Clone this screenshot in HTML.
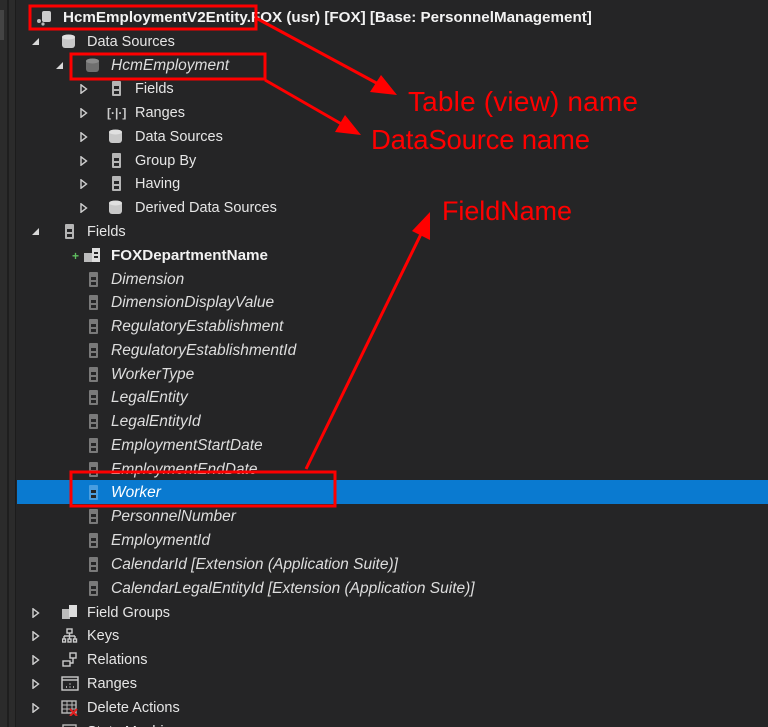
<!DOCTYPE html>
<html><head><meta charset="utf-8"><style>
*{margin:0;padding:0;box-sizing:border-box}
html,body{width:768px;height:727px;overflow:hidden}
body{background:#252526;position:relative;font-family:"Liberation Sans",sans-serif;font-size:14.5px;color:#e6e6e6}
.strip{position:absolute;left:0;top:0;width:16px;height:727px;background:#2b2b2b;border-right:1px solid #1c1c1c}
.strip:after{content:"";position:absolute;left:7px;top:0;width:2px;height:727px;background:#1e1e1e}
.r{position:absolute;height:24px;line-height:24px;white-space:nowrap;left:0;right:0}
.r span{position:absolute;top:1px}
.i{font-style:italic;color:#dedede;font-size:15.5px}
.b{font-weight:bold;color:#f2f2f2;font-size:15.2px}
.tri{position:absolute;top:8px}
.fld{position:absolute;top:5px;width:9px;height:15px;background:#b5b5b5;border-radius:1px}
.fld:before,.fld:after{content:"";position:absolute;left:2px;width:5px;height:3px;background:#252526}
.fld:before{top:5px}.fld:after{top:10px}
.fg{background:#7a7a7a}
.cyl{position:absolute;top:4px}
.sel{background:#0a7ad0}
</style></head><body>
<div class="strip"></div>
<div style="position:absolute;left:0;top:10px;width:4px;height:30px;background:#444"></div>

<svg width="0" height="0" style="position:absolute"><defs>
<symbol id="op" viewBox="0 0 10 10"><polygon points="8,1 8,8 1,8" fill="#d8d8d8"/></symbol>
<symbol id="cl" viewBox="0 0 10 10"><polygon points="2,0.8 7.5,5 2,9.2" fill="none" stroke="#d0d0d0" stroke-width="1.4"/></symbol>
</defs></svg>

<div class="r" style="top:5px"><svg class="cyl" style="left:35px;top:5px" width="18" height="16"><rect x="7" y="1" width="9" height="11" rx="2" fill="#ccc"/><circle cx="4" cy="11" r="2" fill="#bbb"/><circle cx="8" cy="14" r="1.6" fill="#bbb"/></svg><span class="b" style="left:63px">HcmEmploymentV2Entity.FOX (usr) [FOX] [Base: PersonnelManagement]</span></div>
<div class="r" style="top:29px"><svg class="tri" style="left:31px" width="10" height="10"><use href="#op"/></svg><svg class="cyl" style="left:61px" width="16" height="16"><rect x="1" y="2" width="13" height="13" rx="3" fill="#c8c8c8"/><ellipse cx="7.5" cy="4" rx="6.5" ry="2.5" fill="#e0e0e0"/></svg><span style="left:87px">Data Sources</span></div>
<div class="r" style="top:53px"><svg class="tri" style="left:55px" width="10" height="10"><use href="#op"/></svg><svg class="cyl" style="left:85px" width="16" height="16"><rect x="1" y="2" width="13" height="13" rx="3" fill="#6f6f6f"/><ellipse cx="7.5" cy="4" rx="6.5" ry="2.5" fill="#8a8a8a"/></svg><span class="i" style="left:111px">HcmEmployment</span></div>
<div class="r" style="top:76px"><svg class="tri" style="left:79px" width="10" height="10"><use href="#cl"/></svg><div class="fld" style="left:112px"></div><span style="left:135px">Fields</span></div>
<div class="r" style="top:100px"><svg class="tri" style="left:79px" width="10" height="10"><use href="#cl"/></svg><span style="left:107px;font-size:12px;font-weight:bold;color:#ccc">[·|·]</span><span style="left:135px">Ranges</span></div>
<div class="r" style="top:124px"><svg class="tri" style="left:79px" width="10" height="10"><use href="#cl"/></svg><svg class="cyl" style="left:108px" width="16" height="16"><rect x="1" y="2" width="13" height="13" rx="3" fill="#c8c8c8"/><ellipse cx="7.5" cy="4" rx="6.5" ry="2.5" fill="#e0e0e0"/></svg><span style="left:135px">Data Sources</span></div>
<div class="r" style="top:148px"><svg class="tri" style="left:79px" width="10" height="10"><use href="#cl"/></svg><div class="fld" style="left:112px"></div><span style="left:135px">Group By</span></div>
<div class="r" style="top:171px"><svg class="tri" style="left:79px" width="10" height="10"><use href="#cl"/></svg><div class="fld" style="left:112px"></div><span style="left:135px">Having</span></div>
<div class="r" style="top:195px"><svg class="tri" style="left:79px" width="10" height="10"><use href="#cl"/></svg><svg class="cyl" style="left:108px" width="16" height="16"><rect x="1" y="2" width="13" height="13" rx="3" fill="#c8c8c8"/><ellipse cx="7.5" cy="4" rx="6.5" ry="2.5" fill="#e0e0e0"/></svg><span style="left:135px">Derived Data Sources</span></div>
<div class="r" style="top:219px"><svg class="tri" style="left:31px" width="10" height="10"><use href="#op"/></svg><div class="fld" style="left:65px"></div><span style="left:87px">Fields</span></div>
<div class="r" style="top:243px"><span style="left:72px;color:#5fbf5f;font-weight:bold;font-size:12px">+</span><svg class="cyl" style="left:84px;top:5px" width="18" height="16"><rect x="0" y="5" width="8" height="9" fill="#bbb"/><rect x="8" y="0" width="8" height="14" fill="#ddd"/><rect x="10" y="4" width="4" height="2" fill="#252526"/><rect x="10" y="8" width="4" height="2" fill="#252526"/></svg><span class="b" style="left:111px">FOXDepartmentName</span></div>
<div class="r" style="top:267px"><div class="fld fg" style="left:89px"></div><span class="i" style="left:111px">Dimension</span></div>
<div class="r" style="top:290px"><div class="fld fg" style="left:89px"></div><span class="i" style="left:111px">DimensionDisplayValue</span></div>
<div class="r" style="top:314px"><div class="fld fg" style="left:89px"></div><span class="i" style="left:111px">RegulatoryEstablishment</span></div>
<div class="r" style="top:338px"><div class="fld fg" style="left:89px"></div><span class="i" style="left:111px">RegulatoryEstablishmentId</span></div>
<div class="r" style="top:362px"><div class="fld fg" style="left:89px"></div><span class="i" style="left:111px">WorkerType</span></div>
<div class="r" style="top:385px"><div class="fld fg" style="left:89px"></div><span class="i" style="left:111px">LegalEntity</span></div>
<div class="r" style="top:409px"><div class="fld fg" style="left:89px"></div><span class="i" style="left:111px">LegalEntityId</span></div>
<div class="r" style="top:433px"><div class="fld fg" style="left:89px"></div><span class="i" style="left:111px">EmploymentStartDate</span></div>
<div class="r" style="top:457px"><div class="fld fg" style="left:89px"></div><span class="i" style="left:111px">EmploymentEndDate</span></div>
<div class="r sel" style="top:480px;left:17px;height:24px"><div class="fld" style="left:72px;background:#4a9ee0"></div><span class="i" style="left:94px;color:#fff">Worker</span></div>
<div class="r" style="top:504px"><div class="fld fg" style="left:89px"></div><span class="i" style="left:111px">PersonnelNumber</span></div>
<div class="r" style="top:528px"><div class="fld fg" style="left:89px"></div><span class="i" style="left:111px">EmploymentId</span></div>
<div class="r" style="top:552px"><div class="fld fg" style="left:89px"></div><span class="i" style="left:111px">CalendarId [Extension (Application Suite)]</span></div>
<div class="r" style="top:576px"><div class="fld fg" style="left:89px"></div><span class="i" style="left:111px">CalendarLegalEntityId [Extension (Application Suite)]</span></div>
<div class="r" style="top:600px"><svg class="tri" style="left:31px" width="10" height="10"><use href="#cl"/></svg><svg class="cyl" style="left:62px;top:5px" width="16" height="16"><rect x="0" y="4" width="8" height="10" fill="#bbb"/><rect x="7" y="0" width="8" height="12" fill="#ddd"/></svg><span style="left:87px">Field Groups</span></div>
<div class="r" style="top:623px"><svg class="tri" style="left:31px" width="10" height="10"><use href="#cl"/></svg><svg class="cyl" style="left:62px;top:5px" width="16" height="16" stroke="#ccc" fill="none" stroke-width="1.4"><rect x="5" y="1" width="5" height="4"/><path d="M7.5 5v3M2 8h11M2 8v3M7.5 8v3M13 8v3"/><rect x="0.5" y="11" width="3" height="3"/><rect x="6" y="11" width="3" height="3"/><rect x="11.5" y="11" width="3" height="3"/></svg><span style="left:87px">Keys</span></div>
<div class="r" style="top:647px"><svg class="tri" style="left:31px" width="10" height="10"><use href="#cl"/></svg><svg class="cyl" style="left:62px;top:5px" width="16" height="16" stroke="#ccc" fill="none" stroke-width="1.4"><rect x="8" y="1" width="6" height="5"/><rect x="1" y="9" width="7" height="5"/><path d="M11 6v5H8"/></svg><span style="left:87px">Relations</span></div>
<div class="r" style="top:671px"><svg class="tri" style="left:31px" width="10" height="10"><use href="#cl"/></svg><svg class="cyl" style="left:61px;top:5px" width="18" height="16" stroke="#ccc" fill="none" stroke-width="1.4"><rect x="1" y="1" width="16" height="13"/><path d="M1 4h16"/><path d="M5 11h1M8.5 11h1M12 11h1M8.5 8h1"/></svg><span style="left:87px">Ranges</span></div>
<div class="r" style="top:695px"><svg class="tri" style="left:31px" width="10" height="10"><use href="#cl"/></svg><svg class="cyl" style="left:61px;top:5px" width="18" height="16"><rect x="1" y="1" width="14" height="12" fill="none" stroke="#bbb" stroke-width="1.4"/><path d="M1 5h14M1 9h14M6 1v12M11 1v12" stroke="#bbb"/><path d="M9 9l7 7M16 9l-7 7" stroke="#e02020" stroke-width="2"/></svg><span style="left:87px">Delete Actions</span></div>
<div class="r" style="top:719px"><svg class="tri" style="left:31px" width="10" height="10"><use href="#cl"/></svg><svg class="cyl" style="left:62px;top:5px" width="16" height="16"><rect x="1" y="1" width="13" height="12" fill="none" stroke="#bbb" stroke-width="1.4"/></svg><span style="left:87px">State Machines</span></div>

<svg style="position:absolute;left:0;top:0" width="768" height="727">
<g fill="none" stroke="#f00" stroke-width="3">
<rect x="30" y="6" width="226" height="23"/>
<rect x="71" y="54" width="194" height="25"/>
<rect x="71" y="472" width="264" height="34"/>
<path d="M256 18L382 86"/>
<path d="M265 80L345 126"/>
<path d="M306 469L422 232"/>
</g>
<g fill="#f00">
<polygon points="397,95 370,92 381,75"/>
<polygon points="361,135 335,132 345,115"/>
<polygon points="430,212 430,240 412,231"/>
</g>
<g fill="#f00" font-family="Liberation Sans,sans-serif">
<text x="408" y="111" font-size="28" textLength="230">Table (view) name</text>
<text x="371" y="149" font-size="27.5" textLength="219">DataSource name</text>
<text x="442" y="220" font-size="27" textLength="130">FieldName</text>
</g>
</svg>
</body></html>
